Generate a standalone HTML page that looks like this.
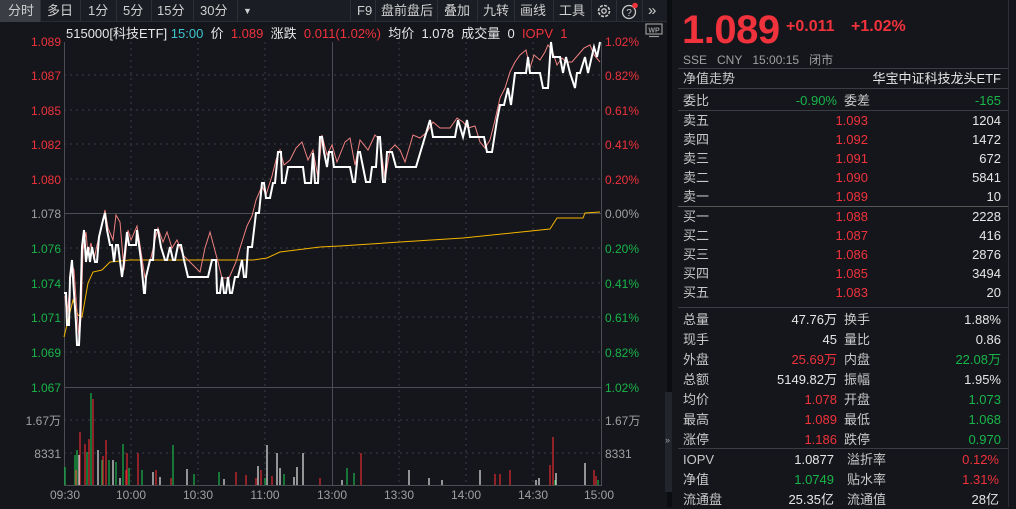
<!DOCTYPE html>
<html><head><meta charset="utf-8"><style>
*{margin:0;padding:0;box-sizing:border-box}
body{width:1016px;height:507px;background:#14161b;font-family:"Liberation Sans","Noto Sans CJK SC",sans-serif;color:#c8c8c8;overflow:hidden;position:relative;font-size:13px}
.a{position:absolute;white-space:nowrap;line-height:1}
.r{color:#f0323c}.g{color:#19b54a}.w{color:#e6e6e6}.gr{color:#a0a0a0}
.tb{position:absolute;left:0;top:0;width:667px;height:22px;background:#1a1d23;border-bottom:1px solid #2a2d33}
.tb span{position:absolute;top:0;font-size:13px;line-height:22px;color:#d0d0d0}
.sep{position:absolute;top:0;width:1px;height:22px;background:#2c2f36}
.hl{position:absolute;left:678px;width:330px;height:1px;background:#3a3d44}
.row{position:absolute;left:683px;width:320px;height:19px;font-size:13px}
.row span{position:absolute;top:0;line-height:19px;height:19px}
</style></head><body>
<div class="tb">
<div style="position:absolute;left:0;top:0;width:40px;height:22px;background:#3a3d44"></div>
<span style="left:8px">分时</span><div class="sep" style="left:40px"></div>
<span style="left:47px">多日</span><div class="sep" style="left:80px"></div>
<span style="left:88px">1分</span><div class="sep" style="left:116px"></div>
<span style="left:123px">5分</span><div class="sep" style="left:151px"></div>
<span style="left:157px">15分</span><div class="sep" style="left:193px"></div>
<span style="left:200px">30分</span><div class="sep" style="left:237px"></div>
<span style="left:243px;font-size:9px">▼</span>
<div class="sep" style="left:350px"></div><span style="left:357px">F9</span><div class="sep" style="left:375px"></div>
<span style="left:381px">盘前盘后</span><div class="sep" style="left:437px"></div>
<span style="left:444px">叠加</span><div class="sep" style="left:477px"></div>
<span style="left:483px">九转</span><div class="sep" style="left:514px"></div>
<span style="left:520px">画线</span><div class="sep" style="left:553px"></div>
<span style="left:559px">工具</span><div class="sep" style="left:591px"></div>
<svg style="position:absolute;left:596px;top:3px" width="16" height="16" viewBox="0 0 16 16"><circle cx="8" cy="8" r="5.5" fill="none" stroke="#ccc" stroke-width="1.6" stroke-dasharray="3 1.3"/><circle cx="8" cy="8" r="2.2" fill="none" stroke="#ccc" stroke-width="1.3"/></svg>
<div class="sep" style="left:616px"></div>
<svg style="position:absolute;left:621px;top:2px" width="18" height="18" viewBox="0 0 18 18"><circle cx="8" cy="10" r="6.5" fill="none" stroke="#ccc" stroke-width="1.3"/><text x="8" y="14" font-size="10" fill="#ccc" text-anchor="middle" font-family="Liberation Sans">?</text><circle cx="14" cy="3.5" r="2.8" fill="#f0323c"/></svg>
<div class="sep" style="left:642px"></div>
<span style="left:648px;font-size:15px">»</span>
</div>
<div style="position:absolute;left:667px;top:0;width:5px;height:507px;background:#0c0d10"></div>
<div style="position:absolute;left:1008px;top:0;width:1px;height:507px;background:#2c2f36"></div>

<div class="a" style="left:66px;top:25px;font-size:13px;line-height:17px">
<span class="w">515000[科技ETF]</span> <span style="color:#3ec6d0">15:00</span>&nbsp; <span class="w">价</span>&nbsp; <span class="r">1.089</span>&nbsp; <span class="w">涨跌</span>&nbsp; <span class="r">0.011(1.02%)</span>&nbsp; <span class="w">均价</span>&nbsp; <span class="w">1.078</span>&nbsp; <span class="w">成交量</span>&nbsp; <span class="w">0</span>&nbsp; <span class="r">IOPV</span>&nbsp; <span class="r">1</span></div>
<svg style="position:absolute;left:645px;top:23px" width="18" height="15" viewBox="0 0 18 15"><rect x="1" y="1" width="16" height="10" fill="none" stroke="#999" stroke-width="1.2"/><text x="9" y="9.5" font-size="7" font-weight="bold" fill="#999" text-anchor="middle" font-family="Liberation Sans">WP</text><line x1="4" y1="13.5" x2="14" y2="13.5" stroke="#999" stroke-width="1.2"/></svg>

<svg style="position:absolute;left:0;top:0" width="667" height="507">
<g stroke="#3a3d44" stroke-width="1" stroke-dasharray="2 4">
<line x1="64" y1="75" x2="601" y2="75"/><line x1="64" y1="110" x2="601" y2="110"/><line x1="64" y1="144" x2="601" y2="144"/><line x1="64" y1="179" x2="601" y2="179"/>
<line x1="64" y1="248" x2="601" y2="248"/><line x1="64" y1="283" x2="601" y2="283"/><line x1="64" y1="317" x2="601" y2="317"/><line x1="64" y1="352" x2="601" y2="352"/>
<line x1="64" y1="420" x2="601" y2="420"/><line x1="64" y1="453" x2="601" y2="453"/>
<line x1="131" y1="42" x2="131" y2="485"/><line x1="198" y1="42" x2="198" y2="485"/><line x1="265" y1="42" x2="265" y2="485"/>
<line x1="399" y1="42" x2="399" y2="485"/><line x1="466" y1="42" x2="466" y2="485"/><line x1="533" y1="42" x2="533" y2="485"/>
</g>
<g stroke="#4a4d54" stroke-width="1">
<line x1="64.5" y1="42" x2="64.5" y2="486"/><line x1="601.5" y1="42" x2="601.5" y2="486"/><line x1="332.5" y1="42" x2="332.5" y2="486"/>
<line x1="64" y1="213.5" x2="601" y2="213.5"/><line x1="64" y1="387.5" x2="601" y2="387.5"/><line x1="64" y1="485.5" x2="601" y2="485.5"/>
</g>
<g font-size="12" font-family="Liberation Sans,Noto Sans CJK SC,sans-serif" text-anchor="end">
<text x="61" y="46" fill="#f0323c">1.089</text><text x="61" y="80" fill="#f0323c">1.087</text><text x="61" y="115" fill="#f0323c">1.085</text><text x="61" y="149" fill="#f0323c">1.082</text><text x="61" y="184" fill="#f0323c">1.080</text>
<text x="61" y="218" fill="#a0a0a0">1.078</text>
<text x="61" y="253" fill="#19b54a">1.076</text><text x="61" y="288" fill="#19b54a">1.074</text><text x="61" y="322" fill="#19b54a">1.071</text><text x="61" y="357" fill="#19b54a">1.069</text><text x="61" y="392" fill="#19b54a">1.067</text>
<text x="61" y="425" fill="#a0a0a0">1.67万</text><text x="61" y="458" fill="#a0a0a0">8331</text>
</g>
<g font-size="12" font-family="Liberation Sans,Noto Sans CJK SC,sans-serif">
<text x="605" y="46" fill="#f0323c">1.02%</text><text x="605" y="80" fill="#f0323c">0.82%</text><text x="605" y="115" fill="#f0323c">0.61%</text><text x="605" y="149" fill="#f0323c">0.41%</text><text x="605" y="184" fill="#f0323c">0.20%</text>
<text x="605" y="218" fill="#a0a0a0">0.00%</text>
<text x="605" y="253" fill="#19b54a">0.20%</text><text x="605" y="288" fill="#19b54a">0.41%</text><text x="605" y="322" fill="#19b54a">0.61%</text><text x="605" y="357" fill="#19b54a">0.82%</text><text x="605" y="392" fill="#19b54a">1.02%</text>
<text x="605" y="425" fill="#a0a0a0">1.67万</text><text x="605" y="458" fill="#a0a0a0">8331</text>
</g>
<g font-size="12" fill="#a0a0a0" font-family="Liberation Sans" text-anchor="middle">
<text x="65" y="499">09:30</text><text x="131" y="499">10:00</text><text x="198" y="499">10:30</text><text x="265" y="499">11:00</text><text x="332" y="499">13:00</text><text x="399" y="499">13:30</text><text x="466" y="499">14:00</text><text x="533" y="499">14:30</text><text x="599" y="499">15:00</text>
</g>
<g stroke-width="1.2">
<g stroke="#19b54a"><line x1="91" y1="485" x2="91" y2="393"/><line x1="65" y1="485" x2="65" y2="467"/><line x1="75" y1="485" x2="75" y2="455"/><line x1="77" y1="485" x2="77" y2="450"/><line x1="87" y1="485" x2="87" y2="452"/><line x1="102" y1="485" x2="102" y2="460"/><line x1="109" y1="485" x2="109" y2="460"/><line x1="116" y1="485" x2="116" y2="462"/><line x1="123" y1="485" x2="123" y2="444"/><line x1="129" y1="485" x2="129" y2="468"/><line x1="142" y1="485" x2="142" y2="470"/><line x1="173" y1="485" x2="173" y2="445"/><line x1="194" y1="485" x2="194" y2="474"/><line x1="219" y1="485" x2="219" y2="472"/><line x1="265" y1="485" x2="265" y2="478"/><line x1="284" y1="485" x2="284" y2="474"/><line x1="347" y1="485" x2="347" y2="468"/><line x1="354" y1="485" x2="354" y2="473"/><line x1="598" y1="485" x2="598" y2="480"/><line x1="555" y1="485" x2="555" y2="480"/></g>
<g stroke="#e02a30"><line x1="93" y1="485" x2="93" y2="399"/><line x1="80" y1="485" x2="80" y2="432"/><line x1="89" y1="485" x2="89" y2="439"/><line x1="85" y1="485" x2="85" y2="444"/><line x1="106" y1="485" x2="106" y2="440"/><line x1="103" y1="485" x2="103" y2="456"/><line x1="127" y1="485" x2="127" y2="453"/><line x1="126" y1="485" x2="126" y2="470"/><line x1="138" y1="485" x2="138" y2="453"/><line x1="156" y1="485" x2="156" y2="470"/><line x1="171" y1="485" x2="171" y2="478"/><line x1="236" y1="485" x2="236" y2="472"/><line x1="246" y1="485" x2="246" y2="475"/><line x1="256" y1="485" x2="256" y2="478"/><line x1="261" y1="485" x2="261" y2="470"/><line x1="272" y1="485" x2="272" y2="476"/><line x1="320" y1="485" x2="320" y2="478"/><line x1="361" y1="485" x2="361" y2="453"/><line x1="495" y1="485" x2="495" y2="474"/><line x1="500" y1="485" x2="500" y2="474"/><line x1="510" y1="485" x2="510" y2="470"/><line x1="553" y1="485" x2="553" y2="437"/><line x1="550" y1="485" x2="550" y2="465"/><line x1="594" y1="485" x2="594" y2="470"/><line x1="596" y1="485" x2="596" y2="476"/><line x1="76" y1="485" x2="76" y2="470"/></g>
<g stroke="#e8e8e8"><line x1="98" y1="485" x2="98" y2="450"/><line x1="79" y1="485" x2="79" y2="455"/><line x1="113" y1="485" x2="113" y2="460"/><line x1="120" y1="485" x2="120" y2="478"/><line x1="153" y1="485" x2="153" y2="472"/><line x1="160" y1="485" x2="160" y2="477"/><line x1="187" y1="485" x2="187" y2="469"/><line x1="224" y1="485" x2="224" y2="479"/><line x1="258" y1="485" x2="258" y2="466"/><line x1="267" y1="485" x2="267" y2="445"/><line x1="277" y1="485" x2="277" y2="453"/><line x1="280" y1="485" x2="280" y2="468"/><line x1="294" y1="485" x2="294" y2="477"/><line x1="297" y1="485" x2="297" y2="467"/><line x1="303" y1="485" x2="303" y2="453"/><line x1="409" y1="485" x2="409" y2="470"/><line x1="429" y1="485" x2="429" y2="478"/><line x1="480" y1="485" x2="480" y2="470"/><line x1="536" y1="485" x2="536" y2="480"/><line x1="539" y1="485" x2="539" y2="478"/><line x1="556" y1="485" x2="556" y2="473"/><line x1="585" y1="485" x2="585" y2="463"/><line x1="342" y1="485" x2="342" y2="480"/><line x1="442" y1="485" x2="442" y2="480"/></g>
</g>
<polyline fill="none" stroke="#f5b400" stroke-width="1" points="64,337 73,300 78,315 82,317 88,283 93,272 102,270 110,262 130,260 253,260 267,258 280,252 320,247 340,246 400,242 463,238 550,229 557,218 583,218 585,213 600,212"/>
<polyline fill="none" stroke="#f08080" stroke-width="1" points="65,296 67,318 70,283 72,265 74,270 77,312 79,338 81,318 83,250 86,232 88,255 91,243 94,260 97,245 101,228 105,210 108,228 113,240 116,215 120,222 124,270 128,230 131,240 137,226 140,245 145,278 150,262 155,240 158,228 163,242 167,232 172,248 177,240 183,255 190,262 200,272 205,248 210,232 218,262 222,278 229,278 236,262 240,248 247,226 252,216 256,200 262,186 266,195 272,176 276,160 280,150 284,165 290,160 296,148 302,142 308,160 313,150 318,178 322,135 327,155 332,145 337,162 345,142 350,138 355,165 360,140 368,150 375,135 380,140 385,180 390,150 395,145 400,150 405,162 413,135 420,138 427,132 433,122 440,128 450,128 457,118 463,122 468,128 475,126 480,142 485,148 490,140 495,120 500,98 505,88 510,72 515,62 520,55 526,50 530,68 534,55 540,60 545,52 548,45 552,50 557,65 562,58 566,62 572,62 578,55 584,48 590,45 594,55 600,62"/>
<polyline fill="none" stroke="#ffffff" stroke-width="2" points="64,293 66,293 67,325 69,325 70,278 72,260 73,278 76,323 77,345 79,345 80,323 82,247 84,230 86,262 88,247 90,262 92,247 95,262 97,262 99,237 103,220 105,213 107,230 110,245 112,245 114,262 116,245 118,245 122,277 124,262 127,232 129,245 136,245 137,230 141,260 144,293 145,293 146,277 150,260 153,260 155,230 158,230 161,247 165,260 167,260 170,247 173,260 175,260 178,245 181,245 184,260 188,277 192,277 200,277 208,277 212,260 216,260 217,293 220,293 222,277 224,293 226,293 228,277 230,293 232,293 235,277 238,277 242,260 244,277 246,277 248,247 252,247 256,213 259,213 262,183 264,183 266,198 270,198 273,183 275,183 278,152 281,152 282,183 285,183 288,167 296,167 300,167 303,167 305,183 311,183 313,153 315,183 318,183 320,137 322,137 324,152 327,167 329,152 332,152 334,167 340,167 350,167 353,182 355,182 358,152 360,152 363,167 366,182 370,182 372,167 376,167 378,137 380,137 383,182 385,182 387,152 392,152 396,167 407,167 410,167 416,167 430,120 433,137 455,137 458,120 463,137 467,120 470,137 484,137 487,152 492,152 497,120 500,105 504,105 508,88 511,105 515,73 526,73 528,57 530,73 540,73 543,88 548,88 551,42 553,57 560,57 563,73 566,57 570,73 575,88 577,73 580,73 585,57 588,73 594,47 597,57 600,42"/>
</svg>

<div class="a r" style="left:682px;top:10px;font-size:40px;font-weight:bold;letter-spacing:-0.5px">1.089</div>
<div class="a r" style="left:786px;top:19px;font-size:16px;font-weight:bold">+0.011</div>
<div class="a r" style="left:851px;top:19px;font-size:16px;font-weight:bold">+1.02%</div>
<div class="a gr" style="left:683px;top:54px;font-size:12px">SSE&nbsp;&nbsp; CNY&nbsp;&nbsp; 15:00:15&nbsp;&nbsp; 闭市</div>
<div class="hl" style="top:68px"></div>
<div class="row" style="top:69px"><span>净值走势</span><span style="right:2px" class="w">华宝中证科技龙头ETF</span></div>
<div class="hl" style="top:88px"></div>
<div class="row" style="top:91px"><span>委比</span><span class="g" style="right:166px">-0.90%</span><span style="left:161px">委差</span><span class="g" style="right:2px">-165</span></div>
<div class="hl" style="top:110px"></div>
<div class="row" style="top:111px"><span>卖五</span><span class="r" style="right:135px">1.093</span><span class="w" style="right:2px">1204</span></div>
<div class="row" style="top:130px"><span>卖四</span><span class="r" style="right:135px">1.092</span><span class="w" style="right:2px">1472</span></div>
<div class="row" style="top:149px"><span>卖三</span><span class="r" style="right:135px">1.091</span><span class="w" style="right:2px">672</span></div>
<div class="row" style="top:168px"><span>卖二</span><span class="r" style="right:135px">1.090</span><span class="w" style="right:2px">5841</span></div>
<div class="row" style="top:187px"><span>卖一</span><span class="r" style="right:135px">1.089</span><span class="w" style="right:2px">10</span></div>
<div class="hl" style="top:206px;background:#555"></div>
<div class="row" style="top:207px"><span>买一</span><span class="r" style="right:135px">1.088</span><span class="w" style="right:2px">2228</span></div>
<div class="row" style="top:226px"><span>买二</span><span class="r" style="right:135px">1.087</span><span class="w" style="right:2px">416</span></div>
<div class="row" style="top:245px"><span>买三</span><span class="r" style="right:135px">1.086</span><span class="w" style="right:2px">2876</span></div>
<div class="row" style="top:264px"><span>买四</span><span class="r" style="right:135px">1.085</span><span class="w" style="right:2px">3494</span></div>
<div class="row" style="top:283px"><span>买五</span><span class="r" style="right:135px">1.083</span><span class="w" style="right:2px">20</span></div>
<div class="hl" style="top:307px"></div>
<div class="row" style="top:310px"><span>总量</span><span class="w" style="right:166px">47.76万</span><span style="left:161px">换手</span><span class="w" style="right:2px">1.88%</span></div>
<div class="row" style="top:330px"><span>现手</span><span class="w" style="right:166px">45</span><span style="left:161px">量比</span><span class="w" style="right:2px">0.86</span></div>
<div class="row" style="top:350px"><span>外盘</span><span class="r" style="right:166px">25.69万</span><span style="left:161px">内盘</span><span class="g" style="right:2px">22.08万</span></div>
<div class="row" style="top:370px"><span>总额</span><span class="w" style="right:166px">5149.82万</span><span style="left:161px">振幅</span><span class="w" style="right:2px">1.95%</span></div>
<div class="row" style="top:390px"><span>均价</span><span class="r" style="right:166px">1.078</span><span style="left:161px">开盘</span><span class="g" style="right:2px">1.073</span></div>
<div class="row" style="top:410px"><span>最高</span><span class="r" style="right:166px">1.089</span><span style="left:161px">最低</span><span class="g" style="right:2px">1.068</span></div>
<div class="row" style="top:430px"><span>涨停</span><span class="r" style="right:166px">1.186</span><span style="left:161px">跌停</span><span class="g" style="right:2px">0.970</span></div>
<div class="hl" style="top:448px"></div>
<div class="row" style="top:450px"><span>IOPV</span><span class="w" style="right:169px">1.0877</span><span style="left:164px">溢折率</span><span class="r" style="right:4px">0.12%</span></div>
<div class="row" style="top:470px"><span>净值</span><span class="g" style="right:169px">1.0749</span><span style="left:164px">贴水率</span><span class="r" style="right:4px">1.31%</span></div>
<div class="row" style="top:490px"><span>流通盘</span><span class="w" style="right:169px">25.35亿</span><span style="left:164px">流通值</span><span class="w" style="right:4px">28亿</span></div>
<div style="position:absolute;left:665px;top:392px;width:7px;height:100px;background:#22252b"></div>
<div class="a gr" style="left:665px;top:436px;font-size:9px">»</div>
</body></html>
